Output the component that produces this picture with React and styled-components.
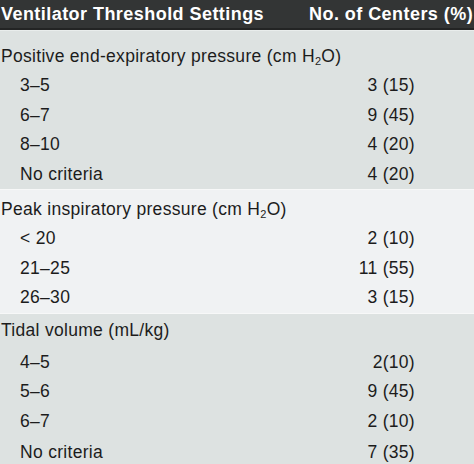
import React from "react";
import styled, { createGlobalStyle } from "styled-components";

const GlobalStyle = createGlobalStyle`
  html, body {
    margin: 0;
    padding: 0;
    background: #dde2e1;
  }
  body {
    font-family: "Liberation Sans", Arial, sans-serif;
    color: #1c1c1c;
    overflow: hidden;
  }
`;

const sections = [
  {
    title: "Positive end-expiratory pressure",
    unit: "h2o",
    tone: "dark",
    top: 10,
    rows: [
      ["3–5", "3 (15)"],
      ["6–7", "9 (45)"],
      ["8–10", "4 (20)"],
      ["No criteria", "4 (20)"],
    ],
  },
  {
    title: "Peak inspiratory pressure",
    unit: "h2o",
    tone: "light",
    top: 4,
    rows: [
      ["< 20", "2 (10)"],
      ["21–25", "11 (55)"],
      ["26–30", "3 (15)"],
    ],
  },
  {
    title: "Tidal volume (mL/kg)",
    tone: "dark",
    top: 1,
    tall: true,
    rows: [
      ["4–5", "2(10)"],
      ["5–6", "9 (45)"],
      ["6–7", "2 (10)"],
      ["No criteria", "7 (35)", true],
    ],
  },
];

const App = () => {
  return (
    <>
      <GlobalStyle />
      <Table>
        <Header>
          <HeadCell>Ventilator Threshold Settings</HeadCell>
          <HeadCell>No. of Centers (%)</HeadCell>
        </Header>
        {sections.map((section, i) => (
          <Section
            key={section.title}
            tone={section.tone}
            first={i === 0}
            top={section.top}
          >
            <Heading tall={section.tall}>
              {section.title}
              {section.unit === "h2o" ? (
                <>
                  {" "}(cm H<sub>2</sub>O)
                </>
              ) : null}
            </Heading>
            {section.rows.map(([label, value, spaced]) => (
              <Row key={label} spaced={spaced}>
                <Label>{label}</Label>
                <Value>{value}</Value>
              </Row>
            ))}
          </Section>
        ))}
      </Table>
    </>
  );
};

export default App;

const Table = styled.div`
  width: 474px;
  height: 464px;
  overflow: hidden;
  display: flex;
  flex-direction: column;
`;

const Header = styled.div`
  height: 28px;
  flex-shrink: 0;
  background: #333535;
  border-bottom: 2px solid #232424;
  display: grid;
  grid-template-columns: 308px 1fr;
  align-items: center;
  color: #ffffff;
`;

const HeadCell = styled.div`
  font-size: 18px;
  font-weight: 700;
  letter-spacing: 0.45px;
  white-space: nowrap;
  padding-left: 1px;
`;

const Section = styled.div`
  flex-shrink: 0;
  background: ${(p) => (p.tone === "light" ? "#f0f2f3" : "#dde2e1")};
  border-top: 1px solid ${(p) => (p.first ? "#e9edec" : "#f7f8f8")};
  padding-top: ${(p) => p.top}px;
  display: flex;
  flex-direction: column;
`;

const Heading = styled.div`
  height: ${(p) => (p.tall ? 33 : 30)}px;
  line-height: 30px;
  font-size: 17.5px;
  letter-spacing: 0.3px;
  white-space: nowrap;
  padding-left: 1px;

  sub {
    font-size: 11px;
    line-height: 0;
    vertical-align: -3px;
  }
`;

const Row = styled.div`
  height: 29.5px;
  margin-top: ${(p) => (p.spaced ? 2 : 0)}px;
  display: flex;
  align-items: center;
  justify-content: space-between;
  padding: 0 59px 0 20px;
  font-size: 17.5px;
  letter-spacing: 0.3px;
`;

const Label = styled.span`
  white-space: nowrap;
`;

const Value = styled.span`
  white-space: nowrap;
  text-align: right;
`;
